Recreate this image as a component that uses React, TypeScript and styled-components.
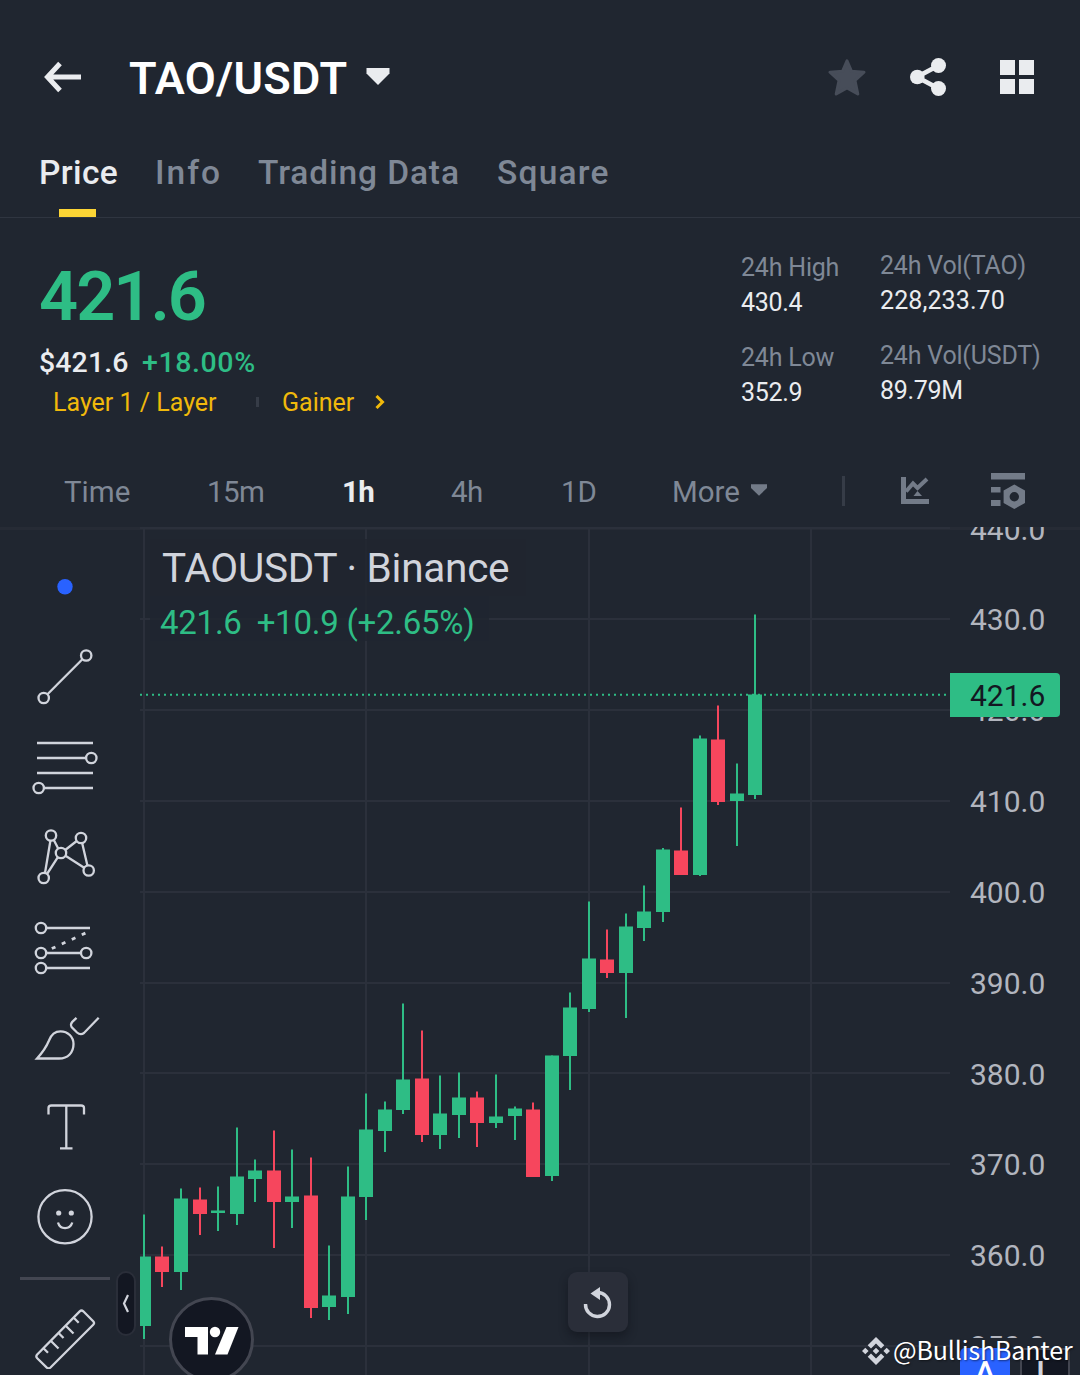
import React from "react";
import styled, { createGlobalStyle } from "styled-components";

const color = {
  bg: "#202630",
  panel: "#131722",
  raised: "#2a2e39",
  grid: "#2b303b",
  text: "#eaecef",
  muted: "#7f8896",
  axis: "#b2b5be",
  tool: "#d1d4dc",
  up: "#2ebd85",
  down: "#f6465d",
  gold: "#f0b90b",
  blue: "#2962ff",
};

const GlobalStyle = createGlobalStyle`
  * { box-sizing: border-box; }
  body { margin: 0; background: ${color.bg}; }
`;

const Screen = styled.main`
  position: relative;
  width: 1080px;
  height: 1375px;
  overflow: hidden;
  display: flex;
  flex-direction: column;
  background: ${color.bg};
  color: ${color.text};
  font-family: Roboto, "Liberation Sans", sans-serif;
  white-space: nowrap;
`;

const Header = styled.header`
  display: flex;
  align-items: center;
  height: 132px;
  padding: 22px 44px 0 44px;
`;

const BackIcon = styled.svg`
  width: 38px;
  height: 32px;
  margin-right: 47px;
`;

const Pair = styled.h1`
  margin: 0;
  padding-top: 4px;
  width: 237px;
  font-size: 45px;
  line-height: 52px;
  font-weight: 600;
  letter-spacing: 0.3px;
  color: #fff;
`;

const Caret = styled.svg<{ $w: number; $h: number; $fill: string }>`
  width: ${(p) => p.$w}px;
  height: ${(p) => p.$h}px;
  margin-bottom: 2px;
  fill: ${(p) => p.$fill};
  flex: none;
`;

const HeaderActions = styled.div`
  display: flex;
  align-items: center;
  margin-left: auto;
`;

const ActionIcon = styled.svg<{ $gap?: number }>`
  width: 38px;
  height: 40px;
  margin-left: ${(p) => p.$gap ?? 0}px;
`;

const Tabs = styled.nav`
  display: flex;
  height: 86px;
  padding-left: 39px;
  border-bottom: 1px solid #2f3540;
`;

const Tab = styled.a<{ $active?: boolean; $width: number; $spacing: number }>`
  display: flex;
  flex-direction: column;
  justify-content: space-between;
  width: ${(p) => p.$width}px;
  padding-top: 21px;
  font-size: 33.5px;
  line-height: 40px;
  font-weight: 500;
  letter-spacing: ${(p) => p.$spacing}px;
  color: ${(p) => (p.$active ? color.text : color.muted)};
`;

const TabMark = styled.span`
  width: 37px;
  height: 8px;
  margin-left: 20px;
  background: #fcd535;
`;

const Summary = styled.section`
  display: flex;
  height: 237px;
  padding: 33px 0 0 39px;
`;

const PriceBlock = styled.div`
  width: 702px;
`;

const LastPrice = styled.div`
  height: 90px;
  font-size: 68.5px;
  line-height: 91px;
  font-weight: 600;
  letter-spacing: -2px;
  color: ${color.up};
`;

const Row = styled.div<{ $h: number }>`
  display: flex;
  align-items: center;
  height: ${(p) => p.$h}px;
`;

const Fiat = styled.span<{ $up?: boolean }>`
  width: ${(p) => (p.$up ? "auto" : "103px")};
  padding-top: 1px;
  font-size: 28.5px;
  font-weight: 500;
  letter-spacing: ${(p) => (p.$up ? 0.6 : 0.1)}px;
  color: ${(p) => (p.$up ? color.up : color.text)};
`;

const Tag = styled.span<{ $left: number; $width: number }>`
  margin-left: ${(p) => p.$left}px;
  width: ${(p) => p.$width}px;
  font-size: 25px;
  color: ${color.gold};
`;

const TagDivider = styled.i`
  width: 3px;
  height: 10px;
  margin-left: 24px;
  background: #363c47;
`;

const ChevronRight = styled.svg`
  width: 10px;
  height: 14px;
`;

const StatColumn = styled.dl<{ $width: number; $raised?: boolean }>`
  margin: 0;
  width: ${(p) => p.$width}px;
  padding-top: ${(p) => (p.$raised ? 1 : 3)}px;
`;

const StatName = styled.dt`
  font-size: 25px;
  line-height: 28px;
  letter-spacing: -0.2px;
  color: ${color.muted};
`;

const StatValue = styled.dd<{ $spacing?: number }>`
  margin: 3px 0 24px;
  font-size: 25px;
  line-height: 35px;
  letter-spacing: ${(p) => p.$spacing ?? -0.3}px;
  color: ${color.text};
`;

const Intervals = styled.nav`
  display: flex;
  align-items: center;
  height: 72px;
  padding-left: 64px;
`;

const Interval = styled.a<{ $width: number; $active?: boolean; $spacing?: number }>`
  width: ${(p) => p.$width}px;
  padding-top: 1px;
  font-size: 29.5px;
  font-weight: ${(p) => (p.$active ? 700 : 400)};
  letter-spacing: ${(p) => p.$spacing ?? 0}px;
  color: ${(p) => (p.$active ? color.text : color.muted)};
`;

const IntervalDivider = styled.i`
  width: 3px;
  height: 30px;
  margin: 0 56px 0 75px;
  background: #363c47;
`;

const ToolbarIcon = styled.svg<{ $w: number; $gap?: number }>`
  width: ${(p) => p.$w}px;
  height: 36px;
  margin-left: ${(p) => p.$gap ?? 0}px;
  margin-bottom: 1px;
  fill: #737b88;
`;

const Workspace = styled.section`
  flex: 1;
  min-height: 0;
  display: grid;
  grid-template-columns: 140px 810px 130px;
  border-top: 3px solid #262b35;
`;

const Tools = styled.aside`
  position: relative;
  padding-top: 12px;
`;

const ToolIcon = styled.svg`
  display: block;
  width: 140px;
  height: 90px;
  fill: none;
  stroke: ${color.tool};
  stroke-width: 2.3;
`;

const ToolsDivider = styled.div`
  width: 90px;
  height: 3px;
  margin: 15px 0 -1px 20px;
  background: #434651;
`;

const Collapse = styled.button`
  position: absolute;
  left: 116px;
  top: 741px;
  width: 20px;
  height: 65px;
  padding: 0;
  border: 2px solid ${color.raised};
  border-radius: 10px;
  background: ${color.panel};
`;

const ChartArea = styled.div`
  position: relative;
  margin-top: -3px;
`;

const Plot = styled.svg`
  display: block;
  width: 810px;
  height: 848px;
`;

const Legend = styled.div`
  position: absolute;
  left: 10px;
  top: 12px;
`;

const LegendTitle = styled.div`
  width: 376px;
  height: 57px;
  padding-left: 12px;
  background: rgba(32, 38, 48, 0.8);
  font-size: 40.5px;
  line-height: 58px;
  letter-spacing: -0.25px;
  color: ${color.tool};
`;

const LegendValues = styled.div`
  display: flex;
  width: 339px;
  height: 45px;
  padding-left: 10px;
  gap: 15px;
  background: rgba(32, 38, 48, 0.85);
  font-size: 33px;
  line-height: 53px;
  letter-spacing: -0.25px;
  color: ${color.up};
`;

const Reload = styled.button`
  position: absolute;
  left: 428px;
  top: 745px;
  width: 60px;
  height: 60px;
  padding: 0;
  border: 0;
  border-radius: 9px;
  background: ${color.raised};
  box-shadow: 0 5px 10px rgba(10, 13, 20, 0.45);
`;

const VendorBadge = styled.div`
  position: absolute;
  left: 29px;
  top: 770px;
  width: 85px;
  height: 85px;
  border: 3px solid #434651;
  border-radius: 50%;
  background: ${color.panel};
`;

const Axis = styled.div`
  position: relative;
  margin-top: -3px;
  overflow: hidden;
`;

const Ticks = styled.div`
  display: flex;
  flex-direction: column;
  height: 811px;
  overflow: hidden;
`;

const Tick = styled.span`
  flex: none;
  height: 90.85px;
  padding-left: 20px;
  font-size: 30px;
  line-height: 91px;
  color: ${color.axis};
  &:first-child {
    margin-top: -43.5px;
  }
`;

const PriceTag = styled.div`
  position: absolute;
  left: 0;
  top: 146px;
  width: 110px;
  height: 44px;
  padding-left: 20px;
  border-radius: 0 4px 4px 0;
  background: ${color.up};
  color: ${color.panel};
  font-size: 30px;
  line-height: 45px;
`;

const ScaleButtons = styled.div`
  display: flex;
  gap: 10px;
  padding: 10px 0 0 10px;
`;

const ScaleButton = styled.button<{ $on?: boolean }>`
  display: flex;
  justify-content: center;
  align-items: flex-start;
  width: 50px;
  height: 60px;
  padding: ${(p) => (p.$on ? 7 : 5)}px 0 0;
  border: ${(p) => (p.$on ? "0" : "2px solid #434651")};
  border-radius: 5px;
  background: ${(p) => (p.$on ? color.blue : color.panel)};
  color: ${(p) => (p.$on ? "#fff" : color.tool)};
  font-family: Roboto, sans-serif;
  font-size: 32px;
  font-weight: 500;
  line-height: 34px;
`;

const Watermark = styled.div`
  position: absolute;
  left: 862px;
  top: 1333px;
  display: flex;
  align-items: center;
  gap: 3px;
  height: 36px;
  color: #fff;
  font-family: "Noto Sans CJK SC", sans-serif;
  font-size: 25px;
  line-height: 33px;
  letter-spacing: -0.15px;
  text-shadow: 1px 1px 2px rgba(0, 0, 0, 0.5);

  span {
    height: 36px;
  }
`;

// [centre x, high, body top, body bottom, low, falling]
type Candle = [number, number, number, number, number, boolean?];
const candles: Candle[] = [
  [144, 1214.5, 1256.5, 1326, 1339],
  [162, 1246.5, 1256.5, 1272, 1287, true],
  [181, 1188.5, 1198.5, 1272, 1290],
  [200, 1187.5, 1199.5, 1214, 1235, true],
  [218, 1186.5, 1210.5, 1213, 1231],
  [237, 1127.5, 1176.5, 1214, 1225],
  [255, 1159.5, 1170.5, 1179, 1202],
  [274, 1130.5, 1170.5, 1202, 1248, true],
  [292, 1149.5, 1196.5, 1202, 1228],
  [311, 1157.5, 1195.5, 1308, 1318, true],
  [329, 1245.5, 1295.5, 1307, 1320],
  [348, 1166.5, 1196.5, 1297, 1314],
  [366, 1093.5, 1129.5, 1197, 1220],
  [385, 1101.5, 1109.5, 1131, 1152],
  [403, 1003.5, 1079.5, 1110, 1114],
  [422, 1030.5, 1078.5, 1135, 1142, true],
  [440, 1075.5, 1113.5, 1135, 1149],
  [459, 1072.5, 1097.5, 1115, 1138],
  [477, 1091.5, 1097.5, 1123, 1147, true],
  [496, 1074.5, 1116.5, 1123, 1128],
  [515, 1106.5, 1108.5, 1116, 1140],
  [533, 1102.5, 1109.5, 1177, 1177, true],
  [552, 1055.5, 1055.5, 1176, 1181],
  [570, 992.5, 1007.5, 1056, 1090],
  [589, 901.5, 958.5, 1009, 1012],
  [607, 929.5, 959.5, 973, 978, true],
  [626, 913.5, 926.5, 973, 1018],
  [644, 885.5, 911.5, 928, 941],
  [663, 848, 849.5, 912, 922],
  [681, 807.5, 850.5, 875, 875, true],
  [700, 735.5, 738.5, 875, 876],
  [718, 705.5, 739.5, 802, 805, true],
  [737, 763.5, 793.5, 801, 846],
  [755, 614.5, 694.5, 795, 799],
];

const rows = [528, 619, 710, 801, 892, 983, 1073, 1164, 1255, 1346];
const columns = [144, 366, 589, 811];
const ticks = ["440.0", "430.0", "420.0", "410.0", "400.0", "390.0", "380.0", "370.0", "360.0", "350.0"];

const CandleChart = () => (
  <Plot viewBox="140 527 810 848">
    <g stroke={color.grid} strokeWidth={2}>
      {rows.map((y) => <line key={y} x1={140} x2={950} y1={y} y2={y} />)}
      {columns.map((x) => <line key={x} x1={x} x2={x} y1={527} y2={1375} />)}
    </g>
    <line x1={140} x2={948} y1={694.7} y2={694.7} stroke={color.up} strokeWidth={2} strokeDasharray="2 4" />
    {candles.map(([x, high, top, bottom, low, falling]) => (
      <g key={x} fill={falling ? color.down : color.up}>
        <rect x={x - 1} y={high} width={2} height={low - high} />
        <rect x={x - 7} y={top} width={14} height={bottom - top} />
      </g>
    ))}
  </Plot>
);

const DrawingTools = () => (
  <Tools>
    <ToolIcon viewBox="0 0 140 90">
      <circle cx="65" cy="44.7" r="7.7" fill={color.blue} stroke="none" />
    </ToolIcon>
    <ToolIcon viewBox="0 0 140 90">
      <circle cx="43.7" cy="66" r="5.2" />
      <circle cx="86.2" cy="23.5" r="5.2" />
      <path d="M47.5 62.2 82.4 27.3" />
    </ToolIcon>
    <ToolIcon viewBox="0 0 140 90">
      <path d="M37 21H93M37 36H86M37 51H93M44 66H93" />
      <circle cx="91.3" cy="36" r="5.2" />
      <circle cx="38.7" cy="66" r="5.2" />
    </ToolIcon>
    <ToolIcon viewBox="0 0 140 90">
      <circle cx="51" cy="23.5" r="5.2" />
      <circle cx="81" cy="26" r="5.2" />
      <circle cx="61" cy="41" r="5.2" />
      <circle cx="43.7" cy="66" r="5.2" />
      <circle cx="88.7" cy="58.5" r="5.2" />
      <path d="M50.4 28.7 45 61M53.8 28l4.4 8.600M57.9 45.200 47 62M65.200 38 76.700 29M65.500 43.700 84.200 55.700M82.200 31.200 87.400 53.400" />
    </ToolIcon>
    <ToolIcon viewBox="0 0 140 90">
      <circle cx="41" cy="26" r="5.2" />
      <circle cx="41" cy="51" r="5.2" />
      <circle cx="86.2" cy="51" r="5.2" />
      <circle cx="41" cy="66" r="5.2" />
      <path d="M46 26H90M46 51H81M46 66H90" />
      <path d="M51.8 46.600 87 30.400" strokeWidth="2.8" strokeDasharray="4 7" />
    </ToolIcon>
    <ToolIcon viewBox="0 0 140 90">
      <path d="M37 66.500C43.500 59.500 46.500 54.500 49 48.500C51.200 42.500 55 39.300 60.500 39.300C68 39.300 73.500 45 73.500 52C73.500 60.500 68 66.500 59 66.500Z" />
      <path d="M76.500 25.800 72.300 29.800Q70 32.500 71.800 35.300L77 40.500Q80.500 43.500 84 41L98.700 25.800" />
    </ToolIcon>
    <ToolIcon viewBox="0 0 140 90">
      <path d="M48.500 32.500V26Q48.500 23.500 51.500 23.500H81Q84 23.500 84 26V32.500M66.300 23.500V66M60 66.300H72.500" />
    </ToolIcon>
    <ToolIcon viewBox="0 0 140 90">
      <circle cx="65" cy="44.800" r="26.600" />
      <g fill={color.tool} stroke="none">
        <circle cx="58.700" cy="41" r="2.600" />
        <circle cx="71.300" cy="41" r="2.600" />
      </g>
      <path d="M58 50.500C60 58 70 58 72.300 50.500" />
    </ToolIcon>
    <ToolsDivider />
    <ToolIcon viewBox="0 0 140 90">
      <path d="M37.200 75.500Q35.500 77.500 37.200 79.200L46.800 88.600Q48.700 90.200 50.500 88.500L93.200 45.800Q95 44 93.200 42.200L83.300 32.300Q81.500 30.700 79.700 32.400Z" />
      <path d="M43.500 69.300 48 73.800M51 62 58.500 69.500M58.800 54.300 63.500 59M66 47 73.500 54.500M74 39 78.700 43.700" />
    </ToolIcon>
    <Collapse aria-label="Collapse">
      <svg width="16" height="60" viewBox="0 0 16 60" fill="none" stroke={color.tool} strokeWidth="2.200">
        <path d="M10 22 6 30.500 10 39" />
      </svg>
    </Collapse>
  </Tools>
);

export default function App() {
  return (
    <>
      <GlobalStyle />
      <Screen>
        <Header>
          <BackIcon viewBox="0 0 38 32" fill="none" stroke={color.text} strokeWidth="5">
            <path d="M37 16H4M16 2.500 3.500 16 16 29.500" />
          </BackIcon>
          <Pair>TAO/USDT</Pair>
          <Caret viewBox="0 0 24 17" $w={24} $h={17} $fill={color.text}>
            <path d="M.5 0H23.500V5.500L12 17 .5 5.500Z" />
          </Caret>
          <HeaderActions>
            <ActionIcon viewBox="0 0 38 40" fill="#474d59" stroke="#474d59" strokeWidth="3" strokeLinejoin="round">
              <path d="M19 3.800 23.500 14.300 36 15.200 27 23.500 29.800 37 19 31 8.200 37 11 23.500 2 15.200 14.500 14.300Z" />
            </ActionIcon>
            <ActionIcon $gap={43} viewBox="0 0 38 40" fill={color.text}>
              <path d="M29.500 8.500 8 20 29.500 31.500" fill="none" stroke={color.text} strokeWidth="4.800" />
              <circle cx="8.300" cy="20" r="7.300" />
              <circle cx="29.500" cy="8.500" r="7.500" />
              <circle cx="29.500" cy="31.500" r="7.500" />
            </ActionIcon>
            <ActionIcon $gap={51} viewBox="0 0 38 40" fill={color.text}>
              <path d="M2 3H17V18H2ZM21 3H36V18H21ZM2 22H17V37H2ZM21 22H36V37H21Z" />
            </ActionIcon>
          </HeaderActions>
        </Header>

        <Tabs>
          <Tab $active $width={116} $spacing={0.4}>Price<TabMark /></Tab>
          <Tab $width={103} $spacing={2}>Info</Tab>
          <Tab $width={239} $spacing={0.900}>Trading Data</Tab>
          <Tab $width={140} $spacing={1.200}>Square</Tab>
        </Tabs>

        <Summary>
          <PriceBlock>
            <LastPrice>421.6</LastPrice>
            <Row $h={42}>
              <Fiat>$421.6</Fiat>
              <Fiat $up>+18.00%</Fiat>
            </Row>
            <Row $h={38}>
              <Tag $left={14} $width={179}>Layer 1 / Layer</Tag>
              <TagDivider />
              <Tag $left={23} $width={93}>Gainer</Tag>
              <ChevronRight viewBox="0 0 10 14" fill="none" stroke={color.gold} strokeWidth="3">
                <path d="M1.500 1 7.500 7 1.500 13" />
              </ChevronRight>
            </Row>
          </PriceBlock>
          <StatColumn $width={139}>
            <StatName>24h High</StatName>
            <StatValue>430.4</StatValue>
            <StatName>24h Low</StatName>
            <StatValue>352.9</StatValue>
          </StatColumn>
          <StatColumn $width={190} $raised>
            <StatName>24h Vol(TAO)</StatName>
            <StatValue $spacing={0.1}>228,233.70</StatValue>
            <StatName>24h Vol(USDT)</StatName>
            <StatValue>89.79M</StatValue>
          </StatColumn>
        </Summary>

        <Intervals>
          <Interval $width={143}>Time</Interval>
          <Interval $width={135} $spacing={-0.6}>15m</Interval>
          <Interval $width={109} $active $spacing={-0.8}>1h</Interval>
          <Interval $width={110} $spacing={-0.6}>4h</Interval>
          <Interval $width={111}>1D</Interval>
          <Interval $width={79}>More</Interval>
          <Caret viewBox="0 0 24 17" $w={16} $h={12} $fill="#737b88">
            <path d="M0 0H24V5.500L12 17 0 5.500Z" />
          </Caret>
          <IntervalDivider />
          <ToolbarIcon $w={29} viewBox="0 0 29 36">
            <path d="M0 4H5V26H28V31H0Z" />
            <path d="M5 18.500 12 10.500 16.500 15 26 6" fill="none" stroke="#737b88" strokeWidth="4" />
            <path d="M12.500 23 16.500 18 21 23Z" />
          </ToolbarIcon>
          <ToolbarIcon $w={35} $gap={61} viewBox="0 0 35 36">
            <path d="M0 0H34V6.500H0ZM0 14H9.500V19.500H0ZM0 27H9.500V33H0Z" />
            <path fillRule="evenodd" d="M23.300 11.500 34 17.500V30L23.300 36 12.600 30V17.500ZM23.300 19A4.700 4.700 0 1 0 23.300 28.400A4.700 4.700 0 1 0 23.300 19Z" />
          </ToolbarIcon>
        </Intervals>

        <Workspace>
          <DrawingTools />
          <ChartArea>
            <CandleChart />
            <Legend>
              <LegendTitle>TAOUSDT · Binance</LegendTitle>
              <LegendValues>
                <span>421.6</span>
                <span>+10.9 (+2.65%)</span>
              </LegendValues>
            </Legend>
            <Reload aria-label="Reset chart">
              <svg width="60" height="60" viewBox="0 0 60 60">
                <path d="M17.500 32A12 12 0 1 0 29.500 20.500" fill="none" stroke={color.tool} strokeWidth="3.400" />
                <path d="M22.500 21.500 32 15V28Z" fill={color.tool} />
              </svg>
            </Reload>
            <VendorBadge>
              <svg width="79" height="79" viewBox="0 0 79 79" fill="#fff">
                <path d="M13 27H36V54.500H25.500V37H13Z" />
                <circle cx="43" cy="32" r="5.200" />
                <path d="M54.500 27H66.500L55.500 54.500H43Z" />
              </svg>
            </VendorBadge>
          </ChartArea>
          <Axis>
            <Ticks>
              {ticks.map((t) => <Tick key={t}>{t}</Tick>)}
            </Ticks>
            <PriceTag>421.6</PriceTag>
            <ScaleButtons>
              <ScaleButton $on>A</ScaleButton>
              <ScaleButton>L</ScaleButton>
            </ScaleButtons>
          </Axis>
        </Workspace>

        <Watermark>
          <svg width="28" height="28" viewBox="0 0 28 28" fill={color.tool}>
            <path d="M14 0 22.300 8.300 19 11.500 14 6.500 9 11.500 5.700 8.300ZM14 28 5.700 19.700 9 16.500 14 21.500 19 16.500 22.300 19.700ZM3.300 10.700 6.600 14 3.300 17.300 0 14ZM24.700 10.700 28 14 24.700 17.300 21.400 14ZM14 10.700 17.300 14 14 17.300 10.700 14Z" />
          </svg>
          <span>@BullishBanter</span>
        </Watermark>
      </Screen>
    </>
  );
}
